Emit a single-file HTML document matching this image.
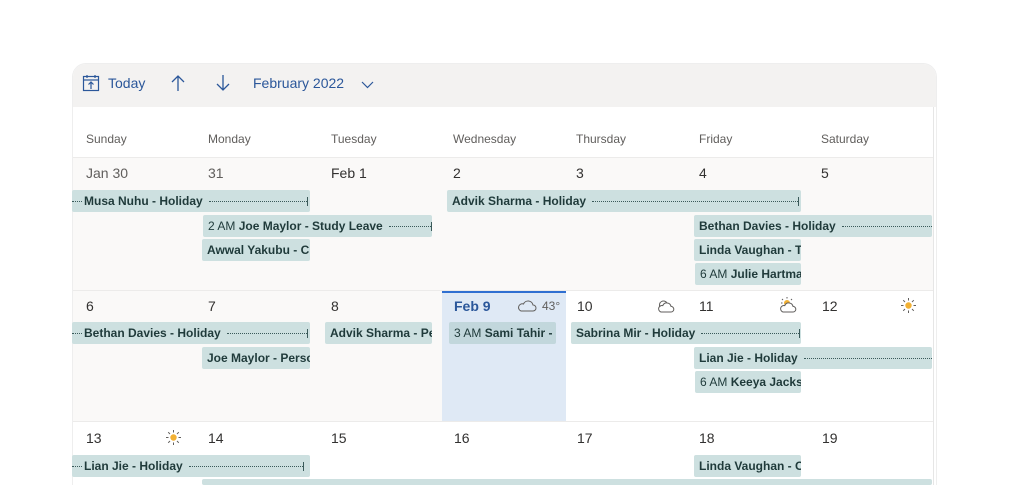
<!DOCTYPE html>
<html style="width:1009px;height:485px;overflow:hidden"><head><meta charset="utf-8"><style>
*{margin:0;padding:0;box-sizing:border-box}
body{width:1009px;height:485px;background:#fff;position:relative;overflow:hidden;font-family:"Liberation Sans",sans-serif}
.card{position:absolute;left:72px;top:63px;width:865px;height:440px;border-radius:14px;background:#fff;overflow:hidden;border:1px solid #eeeeee}
.hdr{position:absolute;left:0;top:0;width:100%;height:43px;background:#f3f2f1}
.a{position:absolute}
.t{position:absolute;font-size:14px;color:#2b579a}
.d{position:absolute;font-size:12px;color:#605e5c}
.n{position:absolute;font-size:14px;color:#323130}
.e{position:absolute;height:22px;background:#cde0e0;border-radius:2px;font-size:12px;font-weight:bold;color:#1f3a3a;line-height:22px;padding-left:5px;white-space:nowrap;overflow:hidden}
.e span.tm{font-weight:normal}
.dot{display:inline-block;vertical-align:middle;border-top:1px dotted #3a5a5a;margin-left:6px;height:0}
.end{display:inline-block;vertical-align:middle;width:1px;height:9px;background:#3a5a5a}
</style></head><body>
<div class="card">
<div class="hdr"></div>
<div class="a" style="left:0;top:94px;width:860px;height:132px;background:#faf9f8"></div>
<div class="a" style="left:0;top:226px;width:369px;height:132px;background:#faf9f8"></div>
<div class="a" style="left:369px;top:226px;width:124px;height:132px;background:#dfe9f5"></div>
<div class="a" style="left:369px;top:226px;width:124px;height:3px;background:#2f6fd1"></div>
<div class="a" style="left:0;top:93px;width:860px;height:1px;background:#ecebea"></div>
<div class="a" style="left:0;top:226px;width:860px;height:1px;background:#ecebea"></div>
<div class="a" style="left:0;top:357px;width:860px;height:1px;background:#ecebea"></div>
<div class="a" style="left:860px;top:43px;width:1px;height:400px;background:#e6e6e6"></div>
</div>
<svg class="a" style="left:82px;top:74px" width="18" height="18" viewBox="0 0 18 18" fill="none" stroke="#2b579a" stroke-width="1.2"><rect x="1.5" y="2.5" width="15" height="14"/><line x1="1.5" y1="6" x2="16.5" y2="6"/><line x1="5" y1="1" x2="5" y2="4"/><line x1="13" y1="1" x2="13" y2="4"/><path d="M9 8v7M6.5 10.5L9 8l2.5 2.5"/></svg>
<div class="t" style="left:108px;top:75px">Today</div>
<svg class="a" style="left:170px;top:74px" width="16" height="18" viewBox="0 0 16 18" fill="none" stroke="#2b579a" stroke-width="1.3"><path d="M8 17V2M2 8l6-6 6 6"/></svg>
<svg class="a" style="left:215px;top:74px" width="16" height="18" viewBox="0 0 16 18" fill="none" stroke="#2b579a" stroke-width="1.3"><path d="M8 1v15M2 10l6 6 6-6"/></svg>
<div class="t" style="left:253px;top:75px">February 2022</div>
<svg class="a" style="left:361px;top:81px" width="13" height="8" viewBox="0 0 13 8" fill="none" stroke="#2b579a" stroke-width="1.2"><path d="M1 1l5.5 5.5L12 1"/></svg>
<div class="d" style="left:86px;top:132px">Sunday</div>
<div class="d" style="left:208px;top:132px">Monday</div>
<div class="d" style="left:331px;top:132px">Tuesday</div>
<div class="d" style="left:453px;top:132px">Wednesday</div>
<div class="d" style="left:576px;top:132px">Thursday</div>
<div class="d" style="left:699px;top:132px">Friday</div>
<div class="d" style="left:821px;top:132px">Saturday</div>
<div class="n" style="left:86px;top:165px;color:#605e5c">Jan 30</div>
<div class="n" style="left:208px;top:165px;color:#605e5c">31</div>
<div class="n" style="left:331px;top:165px">Feb 1</div>
<div class="n" style="left:453px;top:165px">2</div>
<div class="n" style="left:576px;top:165px">3</div>
<div class="n" style="left:699px;top:165px">4</div>
<div class="n" style="left:821px;top:165px">5</div>
<div class="n" style="left:86px;top:298px">6</div>
<div class="n" style="left:208px;top:298px">7</div>
<div class="n" style="left:331px;top:298px">8</div>
<div class="n" style="left:454px;top:298px;color:#2b579a;font-weight:bold">Feb 9</div>
<svg class="a" style="left:517px;top:299px" width="20" height="13" viewBox="0 0 20 13" fill="none" stroke="#605e5c" stroke-width="1"><path d="M4 12h12a3 3 0 0 0 0-6 5 5 0 0 0-9.5-1A3.5 3.5 0 0 0 4 12z"/></svg>
<div class="d" style="left:542px;top:299px">43°</div>
<div class="n" style="left:577px;top:298px">10</div>
<svg class="a" style="left:656px;top:297px" width="19" height="16" viewBox="0 0 19 16" fill="none" stroke="#605e5c" stroke-width="1"><path d="M4 10a4 4 0 0 1 7-4"/><path d="M5 15h10a2.8 2.8 0 0 0 0-5.6 4.3 4.3 0 0 0-8.2-.8A3.2 3.2 0 0 0 5 15z"/></svg>
<div class="n" style="left:699px;top:298px">11</div>
<svg class="a" style="left:779px;top:296px" width="19" height="17" viewBox="0 0 19 17" fill="none" stroke-width="1"><circle cx="8" cy="7" r="3" fill="#f2b134" stroke="none"/><path d="M8 1v1.5M3 3l1 1M13 3l-1 1M2 7h1.5" stroke="#605e5c"/><path d="M4 16h10a2.8 2.8 0 0 0 0-5.6 4.3 4.3 0 0 0-8.2-.8A3.2 3.2 0 0 0 4 16z" stroke="#605e5c" fill="#fff"/></svg>
<div class="n" style="left:822px;top:298px">12</div>
<svg class="a" style="left:900px;top:297px" width="17" height="17" viewBox="0 0 17 17" fill="none" stroke="#605e5c" stroke-width="1"><circle cx="8.5" cy="8.5" r="3.2" fill="#f2b134" stroke="none"/><path d="M8.5 1v2.5M8.5 13.5V16M1 8.5h2.5M13.5 8.5H16M3.2 3.2l1.8 1.8M12 12l1.8 1.8M3.2 13.8L5 12M12 5l1.8-1.8"/></svg>
<div class="n" style="left:86px;top:430px">13</div>
<svg class="a" style="left:165px;top:429px" width="17" height="17" viewBox="0 0 17 17" fill="none" stroke="#605e5c" stroke-width="1"><circle cx="8.5" cy="8.5" r="3.2" fill="#f2b134" stroke="none"/><path d="M8.5 1v2.5M8.5 13.5V16M1 8.5h2.5M13.5 8.5H16M3.2 3.2l1.8 1.8M12 12l1.8 1.8M3.2 13.8L5 12M12 5l1.8-1.8"/></svg>
<div class="n" style="left:208px;top:430px">14</div>
<div class="n" style="left:331px;top:430px">15</div>
<div class="n" style="left:454px;top:430px">16</div>
<div class="n" style="left:577px;top:430px">17</div>
<div class="n" style="left:699px;top:430px">18</div>
<div class="n" style="left:822px;top:430px">19</div>
<div class="e" style="left:72px;top:190px;width:238px;padding-left:0"><span class="dot" style="width:10px;margin:0 2px 0 0"></span>Musa Nuhu - Holiday<span class="dot" style="width:98px"></span><span class="end"></span></div>
<div class="e" style="left:447px;top:190px;width:354px">Advik Sharma - Holiday<span class="dot" style="width:206px"></span><span class="end"></span></div>
<div class="e" style="left:203px;top:215px;width:229px"><span class="tm">2 AM </span>Joe Maylor - Study Leave<span class="dot" style="width:42px"></span><span class="end"></span></div>
<div class="e" style="left:694px;top:215px;width:238px">Bethan Davies - Holiday<span class="dot" style="width:100px"></span></div>
<div class="e" style="left:202px;top:239px;width:108px">Awwal Yakubu - C</div>
<div class="e" style="left:694px;top:239px;width:107px">Linda Vaughan - T</div>
<div class="e" style="left:695px;top:263px;width:106px"><span class="tm">6 AM </span>Julie Hartman</div>
<div class="e" style="left:72px;top:322px;width:238px;padding-left:0"><span class="dot" style="width:10px;margin:0 2px 0 0"></span>Bethan Davies - Holiday<span class="dot" style="width:80px"></span><span class="end"></span></div>
<div class="e" style="left:325px;top:322px;width:107px">Advik Sharma - Personal</div>
<div class="e" style="left:449px;top:322px;width:107px;background:#c2d7dc"><span class="tm">3 AM </span>Sami Tahir - </div>
<div class="e" style="left:571px;top:322px;width:230px">Sabrina Mir - Holiday<span class="dot" style="width:98px"></span><span class="end"></span></div>
<div class="e" style="left:202px;top:347px;width:108px">Joe Maylor - Personal</div>
<div class="e" style="left:694px;top:347px;width:238px">Lian Jie - Holiday<span class="dot" style="width:140px"></span></div>
<div class="e" style="left:695px;top:371px;width:106px"><span class="tm">6 AM </span>Keeya Jackson</div>
<div class="e" style="left:72px;top:455px;width:238px;padding-left:0"><span class="dot" style="width:10px;margin:0 2px 0 0"></span>Lian Jie - Holiday<span class="dot" style="width:114px"></span><span class="end"></span></div>
<div class="e" style="left:694px;top:455px;width:107px">Linda Vaughan - C</div>
<div class="e" style="left:202px;top:479px;width:730px;height:6px"></div>
</body></html>
